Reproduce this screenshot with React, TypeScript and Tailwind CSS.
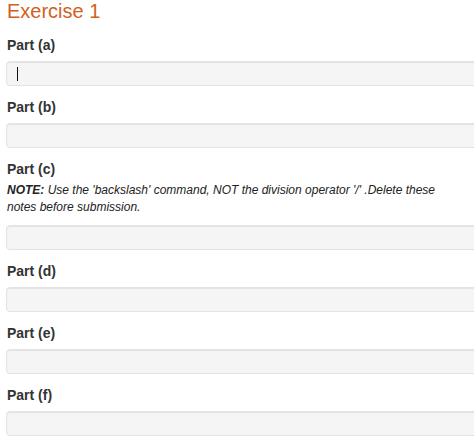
import React from "react";

const font = { fontFamily: '"Liberation Sans", Arial, Helvetica, sans-serif' };

function Field({ cursor = false, className = "" }: { cursor?: boolean; className?: string }) {
  return (
    <div
      className={`h-[25px] w-[490px] rounded-[4px] border border-[#e3e3e3] bg-[#f5f5f5] shadow-[inset_0_1px_1px_rgba(0,0,0,0.075)] flex items-center pl-[10px] ${className}`}
    >
      {cursor && <div className="w-px h-[14px] bg-[#111]" />}
    </div>
  );
}

function Heading({ children, className = "" }: { children: React.ReactNode; className?: string }) {
  return (
    <h4 className={`text-[14px] leading-[20px] font-bold text-[#333] ${className}`}>{children}</h4>
  );
}

export default function App() {
  return (
    <div className="w-[474px] h-[442px] overflow-hidden bg-white" style={font}>
      <div className="pl-[6px] pt-0">
        <h3 className="text-[20px] leading-[22px] text-[#d35f1e] font-normal pl-[1px]">Exercise 1</h3>

        <Heading className="mt-[13px] pl-[1px]">Part (a)</Heading>
        <Field cursor className="mt-[6px]" />

        <Heading className="mt-[11px] pl-[1px]">Part (b)</Heading>
        <Field className="mt-[6px]" />

        <Heading className="mt-[11px] pl-[1px]">Part (c)</Heading>
        <p className="mt-[3px] w-[455px] pl-[1px] text-[12px] leading-[17px] italic text-[#222]">
          <strong className="font-bold">NOTE:</strong> Use the 'backslash' command, NOT the division operator '/' .Delete these notes before submission.
        </p>
        <Field className="mt-[9px]" />

        <Heading className="mt-[11px] pl-[1px]">Part (d)</Heading>
        <Field className="mt-[6px]" />

        <Heading className="mt-[11px] pl-[1px]">Part (e)</Heading>
        <Field className="mt-[6px]" />

        <Heading className="mt-[11px] pl-[1px]">Part (f)</Heading>
        <Field className="mt-[6px]" />
      </div>
    </div>
  );
}
